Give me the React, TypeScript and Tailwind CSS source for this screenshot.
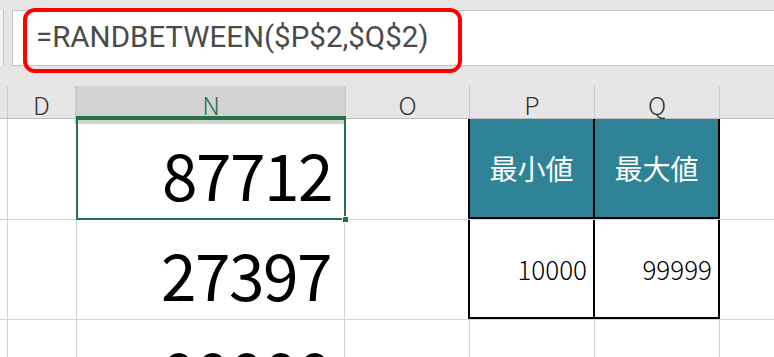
export default function App() {
  const jp = { fontFamily: '"Noto Sans CJK JP", "Noto Sans", sans-serif' };
  const cols = "grid grid-cols-[8px_69px_268px_125px_125px_125px_1fr]";

  return (
    <div className="w-[774px] h-[357px] overflow-hidden bg-white relative" style={jp}>
      {/* ── Formula bar ── */}
      <div className="h-[86px] bg-[#e6e6e6] pt-[10px] flex">
        <div className="w-[4px] h-[56px] bg-[#f3f3f3] border-r border-[#c6c6c6]" />
        <div className="ml-[8px] flex-1 h-[56px] bg-white border-y border-l border-[#c6c6c6] flex items-center pl-[23px]">
          <span
            className="text-[29.5px] text-[#4a4a4a] leading-none"
            style={{ fontFamily: 'Roboto, "Liberation Sans", sans-serif' }}
          >
            =RANDBETWEEN($P$2,$Q$2)
          </span>
        </div>
      </div>

      {/* red annotation round the formula */}
      <div className="absolute left-[23px] top-[8px] w-[439px] h-[65px] border-[4px] border-[#ff0000] rounded-[12px]" />

      {/* ── Column headers ── */}
      <div className={`${cols} h-[33px] bg-[#e6e6e6] border-b border-[#bdbdbd] text-[25px] font-light text-[#333]`}>
        <div className="border-r border-[#c8c8c8]" />
        <div className="border-r-2 border-[#c8c8c8] flex items-center justify-center">D</div>
        <div className="bg-[#d2d2d2] flex items-center justify-center text-[#217346]">N</div>
        <div className="border-l border-r border-[#c8c8c8] flex items-center justify-center">O</div>
        <div className="border-r border-[#c8c8c8] flex items-center justify-center">P</div>
        <div className="border-r border-[#c8c8c8] flex items-center justify-center">Q</div>
        <div />
      </div>

      {/* ── Row 1 ── */}
      <div className={`${cols} h-[101px] border-b border-[#d4d4d4]`}>
        <div className="border-r border-[#d4d4d4]" />
        <div className="border-r border-[#d4d4d4]" />
        <div className="relative flex items-end justify-end pr-[13px] pb-[14px]">
          <span className="text-[64px] leading-none tracking-[-1.5px] text-black">87712</span>
          <div className="absolute -left-[1px] -top-[3px] -right-[1px] -bottom-[1px] border-2 border-t-[4px] border-[#217346]" />
          <div className="absolute -right-[4px] -bottom-[4px] w-[7px] h-[7px] bg-[#217346] border border-white" />
        </div>
        <div className="border-l border-r-2 border-l-[#d4d4d4] border-r-black" />
        <div className="bg-[#2e8396] border-r-2 border-b-2 border-black flex items-center justify-center text-white text-[28px]">
          最小値
        </div>
        <div className="bg-[#2e8396] border-r-2 border-b-2 border-black flex items-center justify-center text-white text-[28px]">
          最大値
        </div>
        <div />
      </div>

      {/* ── Row 2 ── */}
      <div className={`${cols} h-[100px] border-b border-[#d4d4d4]`}>
        <div className="border-r border-[#d4d4d4]" />
        <div className="border-r border-[#d4d4d4]" />
        <div className="border-r border-[#d4d4d4] flex items-end justify-end pr-[13px] pb-[14px]">
          <span className="text-[64px] leading-none tracking-[-1.5px] text-black">27397</span>
        </div>
        <div className="border-r-2 border-black" />
        <div className="border-r-2 border-b-2 border-black flex items-center justify-end pr-[6px] text-[26px] font-light text-black">
          10000
        </div>
        <div className="border-r-2 border-b-2 border-black flex items-center justify-end pr-[6px] text-[26px] font-light text-black">
          99999
        </div>
        <div />
      </div>

      {/* ── Row 3 (cut off) ── */}
      <div className={`${cols} h-[60px]`}>
        <div className="border-r border-[#d4d4d4]" />
        <div className="border-r border-[#d4d4d4]" />
        <div className="border-r border-[#d4d4d4] flex items-start justify-end pr-[13px] pt-[20px]">
          <span className="text-[64px] leading-none tracking-[-1.5px] text-black">00000</span>
        </div>
        <div className="border-r border-[#d4d4d4]" />
        <div className="border-r border-[#d4d4d4]" />
        <div className="border-r border-[#d4d4d4]" />
        <div />
      </div>
    </div>
  );
}
